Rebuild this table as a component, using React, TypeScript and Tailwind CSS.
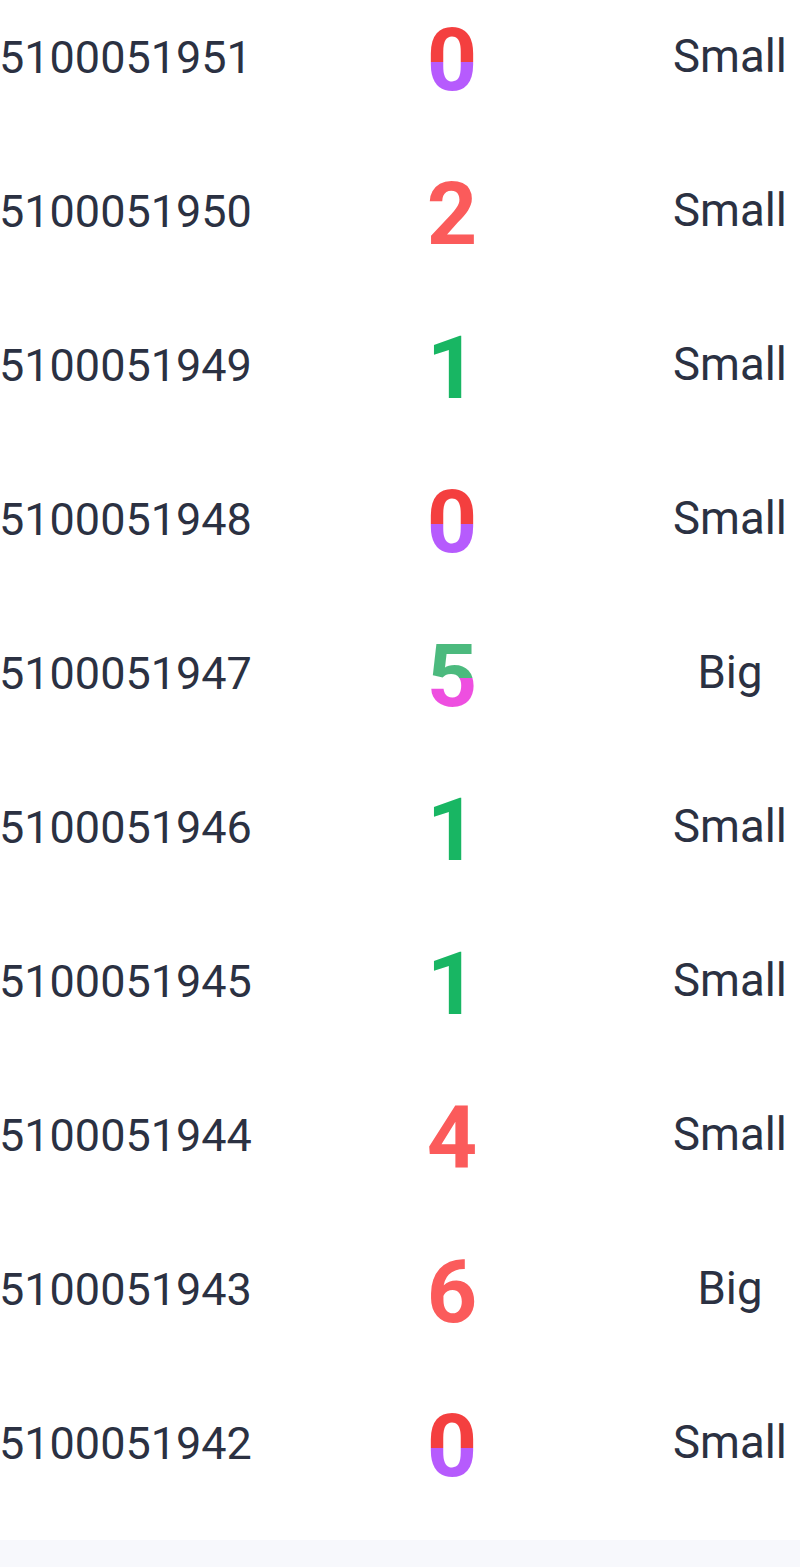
import { clsx } from "clsx";

type Row = { issue: string; num: number; size: "Big" | "Small" };

const rows: Row[] = [
  { issue: "5100051951", num: 0, size: "Small" },
  { issue: "5100051950", num: 2, size: "Small" },
  { issue: "5100051949", num: 1, size: "Small" },
  { issue: "5100051948", num: 0, size: "Small" },
  { issue: "5100051947", num: 5, size: "Big" },
  { issue: "5100051946", num: 1, size: "Small" },
  { issue: "5100051945", num: 1, size: "Small" },
  { issue: "5100051944", num: 4, size: "Small" },
  { issue: "5100051943", num: 6, size: "Big" },
  { issue: "5100051942", num: 0, size: "Small" },
];

// 0 = red + violet, 5 = green + violet, even = red, odd = green
function numClass(n: number) {
  if (n === 0)
    return "bg-[linear-gradient(to_bottom,#f43f3f_52%,#b65bfd_52%)] bg-clip-text text-transparent";
  if (n === 5)
    return "bg-[linear-gradient(to_bottom,#4cba7e_52%,#ee4fe0_52%)] bg-clip-text text-transparent";
  if (n % 2 === 0) return "text-[#fb5b5b]";
  return "text-[#18b663]";
}

export default function App() {
  return (
    <div className="w-[800px] min-h-[1567px] bg-[#f7f8fc] font-['Roboto',sans-serif] text-[#2b3142]">
      <div className="bg-white">
        {rows.map((r) => (
          <div key={r.issue} className="h-[154px]">
            <div className="h-[114px] grid grid-cols-[360px_184px_1fr] items-center">
              <span className="text-[45px] leading-none -ml-[1px]">{r.issue}</span>
              <span className="flex justify-center pt-[6px]">
                <span className={clsx("text-[88px] font-bold leading-none", numClass(r.num))}>
                  {r.num}
                </span>
              </span>
              <span className="justify-self-end w-[140px] text-center text-[45.5px] leading-none">
                {r.size}
              </span>
            </div>
          </div>
        ))}
      </div>
    </div>
  );
}
